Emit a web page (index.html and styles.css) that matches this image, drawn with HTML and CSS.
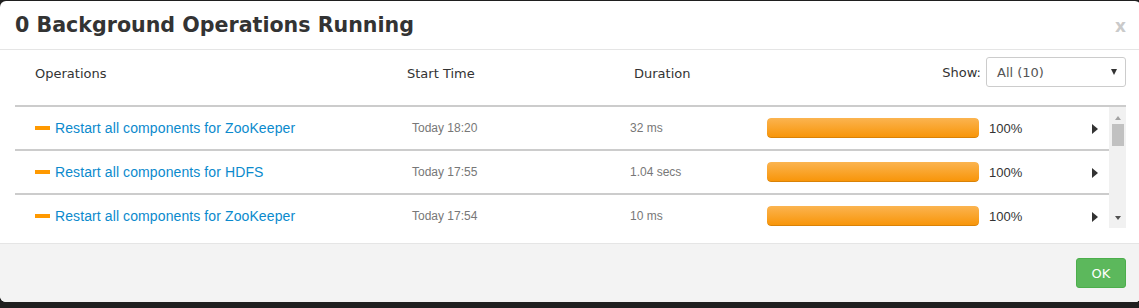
FILE: index.html
```html
<!DOCTYPE html>
<html>
<head>
<meta charset="utf-8">
<link rel="stylesheet" href="styles.css">
</head>
<body>
<div class="modal">
  <div class="modal-header">
    <h3 class="title">0 Background Operations Running</h3>
    <span class="close">x</span>
  </div>
  <div class="modal-body">
    <div class="thead">
      <div class="th th-op">Operations</div>
      <div class="th">Start Time</div>
      <div class="th">Duration</div>
      <div class="show">
        <span class="show-label">Show:</span>
        <div class="select"><span>All (10)</span><i class="caret"></i></div>
      </div>
    </div>
    <div class="scroll-wrap">
      <div class="list">
        <div class="row">
          <div class="op"><span class="dash"></span><a class="link">Restart all components for ZooKeeper</a></div>
          <div class="meta">Today 18:20</div>
          <div class="meta">32 ms</div>
          <div class="progress"><div class="bar" style="width:100%"></div></div>
          <div class="pct">100%</div>
          <div class="arrow"></div>
          <div></div>
        </div>
        <div class="row">
          <div class="op"><span class="dash"></span><a class="link">Restart all components for HDFS</a></div>
          <div class="meta">Today 17:55</div>
          <div class="meta">1.04 secs</div>
          <div class="progress"><div class="bar" style="width:100%"></div></div>
          <div class="pct">100%</div>
          <div class="arrow"></div>
          <div></div>
        </div>
        <div class="row">
          <div class="op"><span class="dash"></span><a class="link">Restart all components for ZooKeeper</a></div>
          <div class="meta">Today 17:54</div>
          <div class="meta">10 ms</div>
          <div class="progress"><div class="bar" style="width:100%"></div></div>
          <div class="pct">100%</div>
          <div class="arrow"></div>
          <div></div>
        </div>
      </div>
      <div class="scrollbar">
        <i class="sb-up"></i>
        <div class="sb-track"><div class="sb-thumb"></div></div>
        <i class="sb-down"></i>
      </div>
    </div>
  </div>
  <div class="modal-footer">
    <button class="btn-ok">OK</button>
  </div>
</div>
</body>
</html>
```

FILE: styles.css
```css
html, body {
  margin: 0;
  padding: 0;
}
body {
  background: #1f1f1f;
  width: 1139px;
  height: 308px;
  overflow: hidden;
  font-family: "DejaVu Sans", Verdana, sans-serif;
  color: #333;
}
.modal {
  margin-top: 1px;
  width: 1141px;
  height: 301px;
  background: #fff;
  border-radius: 6px;
  overflow: hidden;
  display: flex;
  flex-direction: column;
}
.modal-header {
  box-sizing: border-box;
  height: 49px;
  padding: 13px 15px 0 15px;
  border-bottom: 1px solid #e5e5e5;
  display: flex;
  justify-content: space-between;
  align-items: flex-start;
}
.title {
  margin: 0;
  font-size: 20.6px;
  line-height: 22px;
  font-weight: bold;
  color: #333;
}
.close {
  font-size: 17px;
  line-height: 22px;
  font-weight: bold;
  color: #cacaca;
  margin-right: 0;
  margin-top: 1px;
}
.modal-body {
  padding: 0 15px 15px 15px;
  border-bottom: 1px solid #e5e5e5;
}
.thead {
  display: grid;
  grid-template-columns: 392px 227px 1fr auto;
  align-items: center;
  padding: 7px 0 18px 0;
  border-bottom: 2px solid #ccc;
  font-size: 13px;
}
.th {
  padding-top: 3px;
}
.th-op {
  padding-left: 20px;
}
.show {
  display: flex;
  align-items: center;
  gap: 5px;
}
.show-label {
  font-size: 13px;
  color: #333;
}
.select {
  box-sizing: border-box;
  width: 140px;
  height: 30px;
  border: 1px solid #ccc;
  border-radius: 3px;
  padding: 0 8px 0 10px;
  display: flex;
  align-items: center;
  justify-content: space-between;
  color: #555;
  font-size: 13px;
}
.caret {
  width: 0;
  height: 0;
  border-left: 3.5px solid transparent;
  border-right: 3.5px solid transparent;
  border-top: 6px solid #333;
}
.scroll-wrap {
  display: flex;
  height: 121px;
}
.list {
  flex: 1;
  overflow: hidden;
}
.row {
  display: grid;
  grid-template-columns: 397px 218px 137px 212px 113px 6px 1fr;
  align-items: center;
  height: 42px;
  border-bottom: 2px solid #ccc;
}
.op {
  padding-left: 20px;
  display: flex;
  align-items: center;
  gap: 5px;
}
.dash {
  display: block;
  width: 15px;
  height: 4px;
  background: #ff9900;
}
.link {
  font-family: "Liberation Sans", Arial, sans-serif;
  font-size: 14px;
  letter-spacing: 0.1px;
  color: #0b8acd;
  text-decoration: none;
}
.meta {
  font-family: "Liberation Sans", Arial, sans-serif;
  font-size: 12px;
  color: #777;
}
.progress {
  height: 20px;
  border-radius: 4px;
  overflow: hidden;
  background: #f5f5f5;
}
.bar {
  height: 100%;
  background: linear-gradient(to bottom, #fbb450, #f89406);
  box-shadow: inset 0 -1px 0 rgba(0,0,0,0.12);
  border-radius: 4px;
}
.pct {
  font-family: "Liberation Sans", Arial, sans-serif;
  padding-left: 10px;
  font-size: 13px;
  color: #333;
}
.arrow {
  width: 0;
  height: 0;
  border-top: 5.5px solid transparent;
  border-bottom: 5.5px solid transparent;
  border-left: 6px solid #333;
  margin-top: 2px;
}
.scrollbar {
  width: 17px;
  background: #f1f1f1;
  display: flex;
  flex-direction: column;
  align-items: center;
}
.sb-up {
  margin-top: 9px;
  width: 0;
  height: 0;
  border-left: 3.5px solid transparent;
  border-right: 3.5px solid transparent;
  border-bottom: 4px solid #a3a3a3;
}
.sb-track {
  flex: 1;
  width: 100%;
  padding-top: 4px;
  box-sizing: border-box;
  display: flex;
  justify-content: center;
}
.sb-thumb {
  width: 12px;
  height: 22px;
  background: #c1c1c1;
}
.sb-down {
  margin-bottom: 8px;
  width: 0;
  height: 0;
  border-left: 3.5px solid transparent;
  border-right: 3.5px solid transparent;
  border-top: 4px solid #505050;
}
.modal-footer {
  flex: 1;
  background: #f3f3f3;
  padding: 14px 15px;
  display: flex;
  justify-content: flex-end;
  align-items: flex-start;
}
.btn-ok {
  width: 50px;
  height: 30px;
  border: 1px solid #4cae4c;
  border-radius: 3px;
  background: #5cb85c;
  color: #fff;
  font-family: "DejaVu Sans", Verdana, sans-serif;
  font-size: 13px;
  padding: 0;
}
```
